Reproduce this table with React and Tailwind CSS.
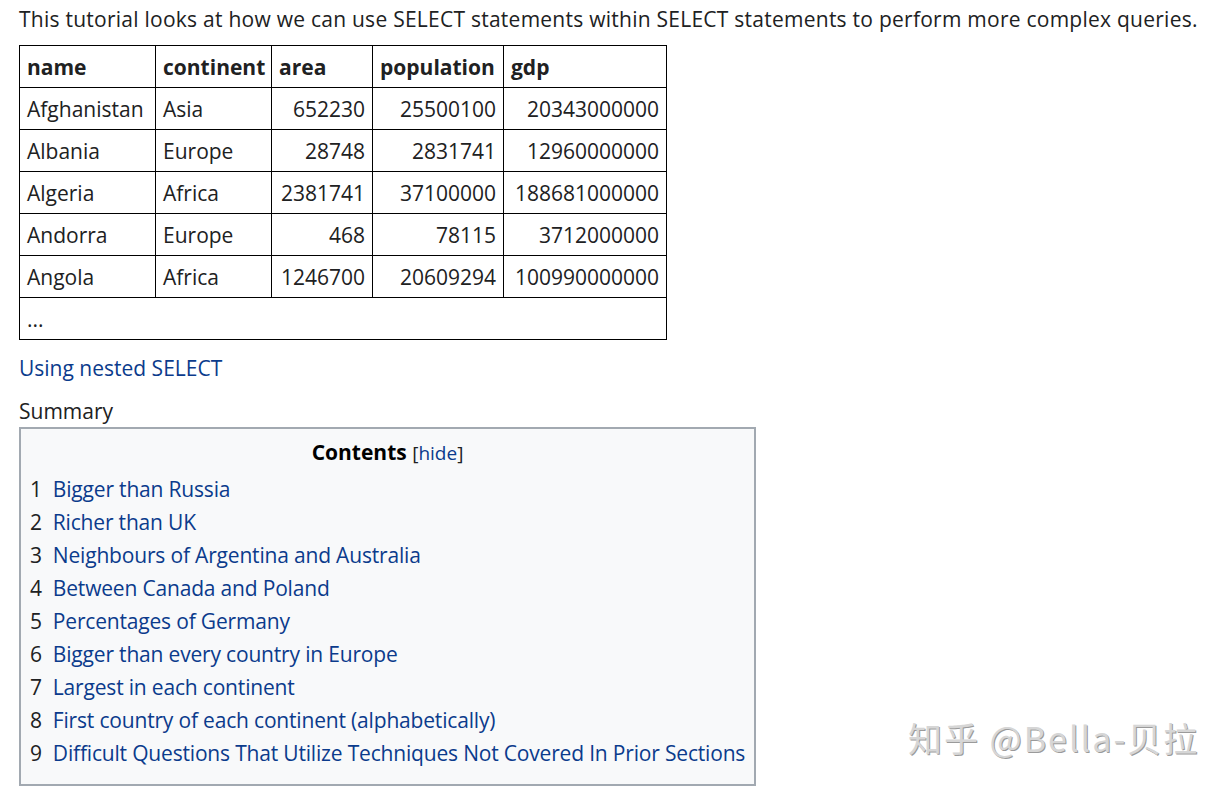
import React from "react";

const ROWS = [
  ["Afghanistan", "Asia", "652230", "25500100", "20343000000"],
  ["Albania", "Europe", "28748", "2831741", "12960000000"],
  ["Algeria", "Africa", "2381741", "37100000", "188681000000"],
  ["Andorra", "Europe", "468", "78115", "3712000000"],
  ["Angola", "Africa", "1246700", "20609294", "100990000000"],
];

const COLS = [
  { h: "name", w: "w-[136px]" },
  { h: "continent", w: "w-[116px]" },
  { h: "area", w: "w-[101px]" },
  { h: "population", w: "w-[131px]" },
  { h: "gdp", w: "w-[163px]" },
];

const TOC = [
  "Bigger than Russia",
  "Richer than UK",
  "Neighbours of Argentina and Australia",
  "Between Canada and Poland",
  "Percentages of Germany",
  "Bigger than every country in Europe",
  "Largest in each continent",
  "First country of each continent (alphabetically)",
  "Difficult Questions That Utilize Techniques Not Covered In Prior Sections",
];

export default function App() {
  return (
    <div className="relative w-[1231px] h-[789px] overflow-hidden bg-white text-[#202122] pl-[19px] pt-[5px] text-[21px] leading-[28px] font-['Open_Sans',sans-serif]">
      <p className="whitespace-nowrap tracking-[0.25px]">
        This tutorial looks at how we can use SELECT statements within SELECT statements to perform more complex queries.
      </p>

      <table className="mt-[12px] table-fixed w-[648px] border-collapse border border-black">
        <thead>
          <tr className="h-[42px]">
            {COLS.map((c) => (
              <th key={c.h} className={`${c.w} border border-black px-[7px] text-left font-bold`}>
                {c.h}
              </th>
            ))}
          </tr>
        </thead>
        <tbody>
          {ROWS.map((r) => (
            <tr key={r[0]} className="h-[42px]">
              <td className="border border-black px-[7px]">{r[0]}</td>
              <td className="border border-black px-[7px]">{r[1]}</td>
              <td className="border border-black px-[7px] text-right">{r[2]}</td>
              <td className="border border-black px-[7px] text-right">{r[3]}</td>
              <td className="border border-black px-[7px] text-right">{r[4]}</td>
            </tr>
          ))}
          <tr className="h-[42px]">
            <td colSpan={5} className="border border-black px-[7px]">...</td>
          </tr>
        </tbody>
      </table>

      <p className="mt-[14px] text-[#0b3b8c]">Using nested SELECT</p>
      <p className="mt-[15px]">Summary</p>

      <div className="mt-[2px] w-[737px] border-2 border-[#a2a9b1] bg-[#f8f9fa] px-[9px] pt-[9px] pb-[12px]">
        <div className="text-center">
          <span className="font-bold text-black">Contents</span>{" "}
          <span className="text-[19px]">
            [<span className="text-[#0b3b8c]">hide</span>]
          </span>
        </div>
        <ul className="mt-[8px]">
          {TOC.map((t, i) => (
            <li key={t} className="h-[33px] flex gap-[11px] whitespace-nowrap tracking-[-0.18px]">
              <span>{i + 1}</span>
              <span className="text-[#0b3b8c]">{t}</span>
            </li>
          ))}
        </ul>
      </div>

      <div className="absolute left-[908px] top-[716px] text-[34px] leading-[44px] tracking-[2px] text-[#d6d6d6] [text-shadow:1px_1px_0_#9a9a9a] font-['Noto_Sans_CJK_SC',sans-serif]">
        知乎 @Bella-贝拉
      </div>
    </div>
  );
}
